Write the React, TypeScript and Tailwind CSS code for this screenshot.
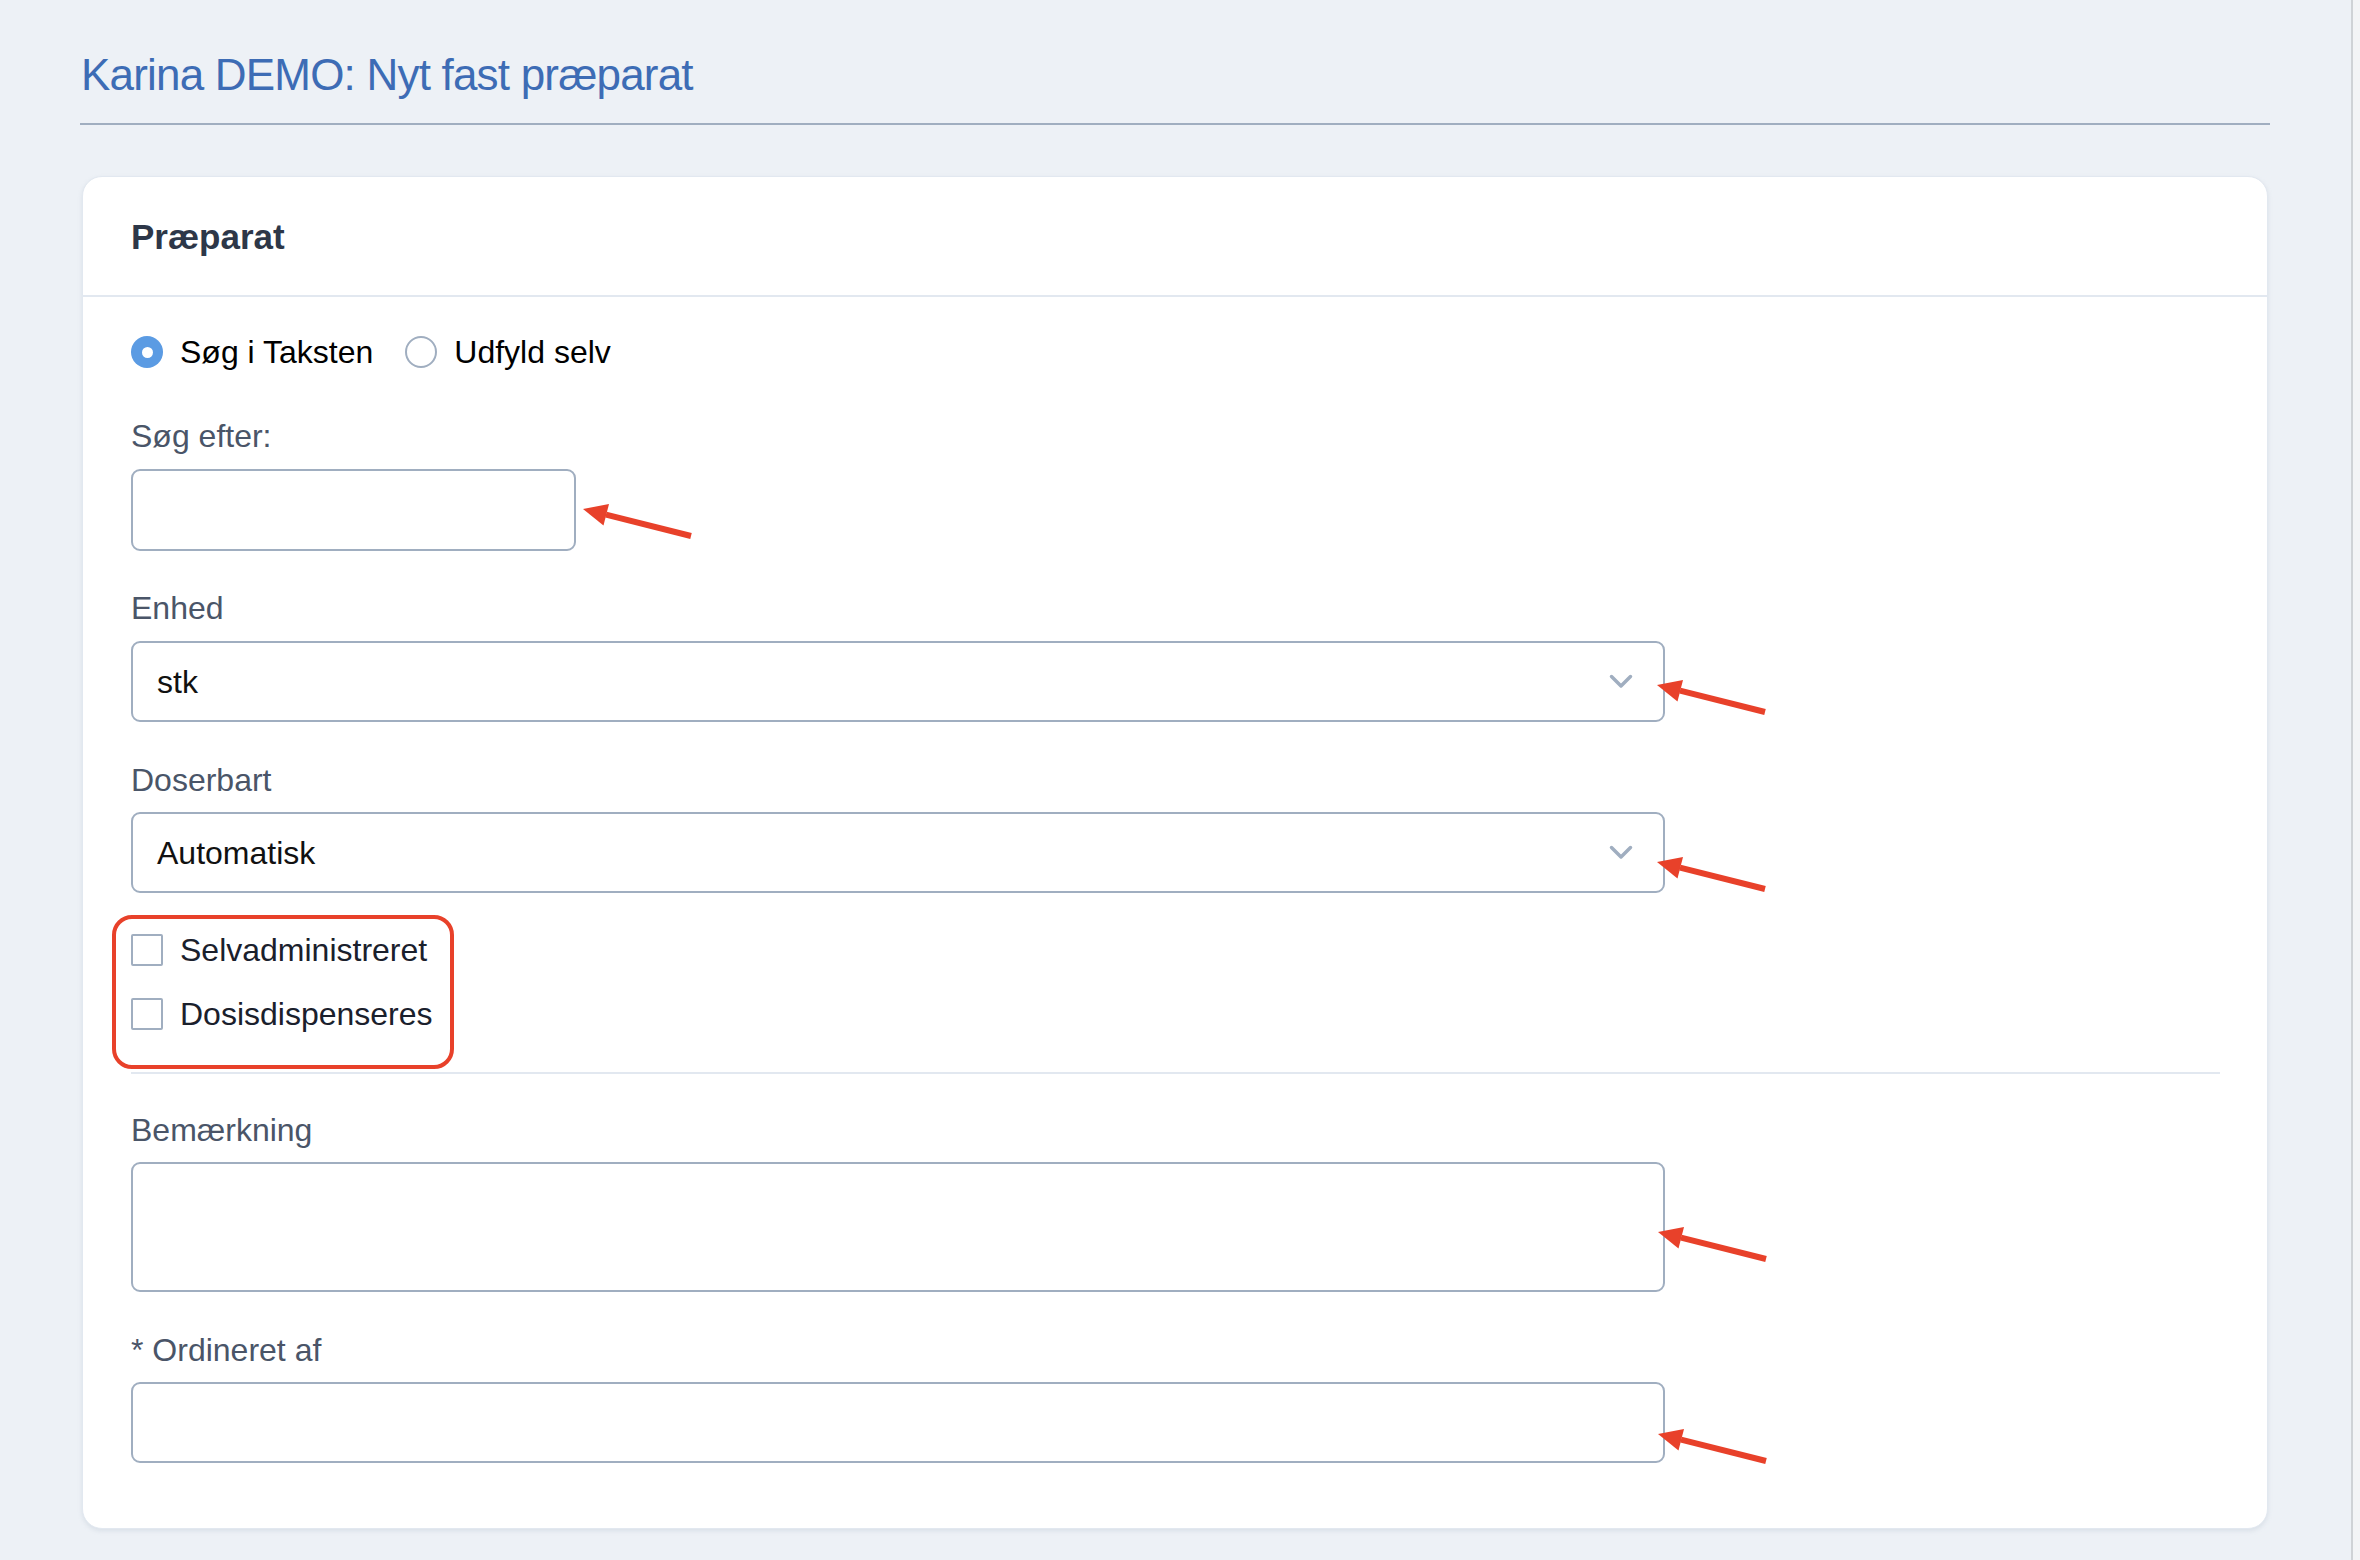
import { ReactNode } from 'react';

// red annotation arrow, tip sits at (4,8) of the svg box
function Arrow({ className }: { className: string }) {
  return (
    <svg className={`pointer-events-none absolute ${className}`} width="114" height="40" viewBox="0 0 114 40">
      <line x1="26" y1="13.7" x2="111" y2="35" stroke="#e8412a" strokeWidth="6" />
      <polygon points="3,8 23.5,24.5 29,3" fill="#e8412a" />
    </svg>
  );
}

function Label({ children }: { children: ReactNode }) {
  return <div className="text-[32px] leading-[38px] text-[#4a5568]">{children}</div>;
}

function Chevron() {
  return (
    <svg width="24" height="15" viewBox="0 0 24 15" className="flex-shrink-0">
      <polyline points="2.5,2.5 12,12 21.5,2.5" fill="none" stroke="#a0aec0" strokeWidth="3.5" strokeLinecap="round" strokeLinejoin="round" />
    </svg>
  );
}

function Select({ value }: { value: string }) {
  return (
    <div className="flex h-[81px] w-[1534px] items-center justify-between rounded-[9px] border-2 border-[#a0aec0] bg-white pl-[24px] pr-[30px]">
      <span className="text-[32px] leading-[38px] text-[#111]">{value}</span>
      <Chevron />
    </div>
  );
}

function Checkbox({ label }: { label: string }) {
  return (
    <div className="flex h-[38px] items-center gap-[17px]">
      <div className="h-[32px] w-[32px] rounded-[2px] border-2 border-[#a0aec0] bg-white" />
      <span className="text-[32px] leading-[38px] text-[#1a202c]">{label}</span>
    </div>
  );
}

export default function App() {
  return (
    <div className="flex min-h-screen bg-[#edf1f6] font-['Liberation_Sans',Arial,sans-serif]">
      <main className="flex-1 pl-[80px] pr-[81px]">
        {/* Page title */}
        <div className="border-b-2 border-[#a0aec0] pb-[22px] pt-[49px]">
          <h1 className="pl-[1px] text-[44px] leading-[52px] tracking-[-0.8px] text-[#3d6cb5]">Karina DEMO: Nyt fast præparat</h1>
        </div>

        {/* Card */}
        <section className="mx-[2px] mt-[51px] rounded-[20px] border border-[#e2e8f0] bg-white shadow-[0_2px_4px_rgba(160,174,192,0.25)]">
          <div className="border-b-2 border-[#e2e8f0] pb-[37px] pl-[48px] pt-[39px]">
            <h2 className="text-[35px] font-bold leading-[42px] text-[#2d3748]">Præparat</h2>
          </div>

          <div className="pb-[65px] pl-[48px] pr-[47px] pt-[36px]">
            {/* Radios */}
            <div className="flex h-[38px] items-center">
              <div className="flex h-[32px] w-[32px] items-center justify-center rounded-full bg-[#5b9be3]">
                <div className="h-[11px] w-[11px] rounded-full bg-white" />
              </div>
              <span className="ml-[17px] text-[32px] leading-[38px] text-black">Søg i Taksten</span>
              <div className="ml-[32px] h-[32px] w-[32px] rounded-full border-2 border-[#a0aec0] bg-white" />
              <span className="ml-[17px] text-[32px] leading-[38px] text-black">Udfyld selv</span>
            </div>

            {/* Søg efter */}
            <div className="mt-[46px]">
              <Label>Søg efter:</Label>
              <div className="relative mt-[14px] w-[445px]">
                <div className="h-[82px] w-[445px] rounded-[9px] border-2 border-[#a0aec0] bg-white" />
                <Arrow className="left-[449px] top-[32px]" />
              </div>
            </div>

            {/* Enhed */}
            <div className="mt-[38px]">
              <Label>Enhed</Label>
              <div className="relative mt-[14px] w-[1534px]">
                <Select value="stk" />
                <Arrow className="left-[1523px] top-[36px]" />
              </div>
            </div>

            {/* Doserbart */}
            <div className="mt-[39px]">
              <Label>Doserbart</Label>
              <div className="relative mt-[13px] w-[1534px]">
                <Select value="Automatisk" />
                <Arrow className="left-[1523px] top-[42px]" />
              </div>
            </div>

            {/* Checkboxes */}
            <div className="relative mt-[38px] flex w-fit flex-col gap-[26px]">
              <Checkbox label="Selvadministreret" />
              <Checkbox label="Dosisdispenseres" />
              <div className="pointer-events-none absolute left-[-19px] top-[-16px] h-[154px] w-[342px] rounded-[20px] border-[4px] border-[#e8412a]" />
            </div>

            <div className="mt-[39px] h-[2px] bg-[#e2e8f0]" />

            {/* Bemærkning */}
            <div className="mt-[37px]">
              <Label>Bemærkning</Label>
              <div className="relative mt-[13px] w-[1534px]">
                <div className="h-[130px] w-[1534px] rounded-[9px] border-2 border-[#a0aec0] bg-white" />
                <Arrow className="left-[1524px] top-[62px]" />
              </div>
            </div>

            {/* Ordineret af */}
            <div className="mt-[39px]">
              <Label>* Ordineret af</Label>
              <div className="relative mt-[13px] w-[1534px]">
                <div className="h-[81px] w-[1534px] rounded-[9px] border-2 border-[#a0aec0] bg-white" />
                <Arrow className="left-[1524px] top-[44px]" />
              </div>
            </div>
          </div>
        </section>
      </main>

      {/* scrollbar edge */}
      <div className="w-[9px] border-l-2 border-[#cfd2d6] bg-[#f3f4f6]" />
    </div>
  );
}
